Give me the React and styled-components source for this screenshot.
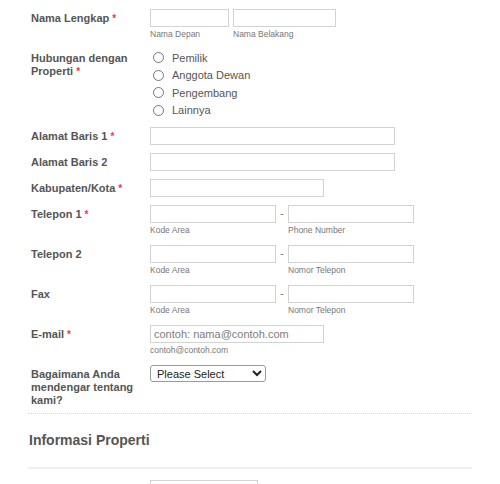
import React from 'react';
import styled, {createGlobalStyle} from "styled-components";

const GlobalStyle = createGlobalStyle`
    html, body {
        margin: 0;
        padding: 0;
        background: #fff;
    }
    body {
        font-family: "Liberation Sans", Arial, sans-serif;
        color: #555;
    }
`

const Form = styled.form`
    padding-top: 5px;
    width: 500px;
`

const Row = styled.div`
    display: flex;
    align-items: flex-start;
    padding: 4px 0 4px 31px;
    margin-top: ${props => props.$mt || 0}px;
`

const Label = styled.label`
    flex: none;
    width: 111px;
    padding: 3px 8px 0 0;
    font-size: 11px;
    font-weight: bold;
    line-height: 13px;
    color: #555;
`

const Req = styled.span`
    color: #f23a3c;
    font-size: 10px;
    line-height: 13px;
    margin-left: 3px;
`

const Field = styled.div`
    display: flex;
    align-items: flex-start;
`

const Group = styled.div`
    display: flex;
    flex-direction: column;
    margin-left: ${props => props.$ml || 0}px;
`

const Input = styled.input`
    box-sizing: border-box;
    width: ${props => props.$w}px;
    height: 18px;
    margin: 0;
    padding: 0 3px;
    border: 1px solid #d3d3d3;
    border-radius: 0;
    font-family: "Liberation Sans", Arial, sans-serif;
    font-size: 11px;
    color: #555;
    outline: none;
    &::placeholder {
        color: #7d7d7d;
    }
`

const Sub = styled.span`
    font-size: 8.5px;
    line-height: 14px;
    color: #777;
`

const Dash = styled.span`
    width: 12px;
    text-align: center;
    font-size: 10px;
    line-height: 18px;
    color: #777;
`

const RadioList = styled.div`
    display: flex;
    flex-direction: column;
`

const RadioItem = styled.label`
    display: flex;
    align-items: center;
    height: 17.5px;
    font-size: 11px;
    color: #555;
`

const Circle = styled.span`
    box-sizing: border-box;
    width: 11px;
    height: 11px;
    margin: 0 8px 0 3px;
    border: 1px solid #777;
    border-radius: 50%;
    background: #fff;
`

const Select = styled.select`
    box-sizing: border-box;
    width: 116px;
    height: 17px;
    margin: 0;
    padding: 0 2px;
    border: 1px solid #9a9a9a;
    border-radius: 3px;
    background: #fff;
    font-family: "Liberation Sans", Arial, sans-serif;
    font-size: 11px;
    color: #222;
`

const Divider = styled.hr`
    margin: ${props => props.$solid ? 0 : 2}px 28px 0;
    border: none;
    border-top: ${props => props.$solid ? '2px solid #efefef' : '1px dotted #d8d8d8'};
    height: 0;
`

const Heading = styled.h2`
    margin: 0;
    padding: 18px 0 19px 29px;
    font-size: 14px;
    line-height: 16px;
    font-weight: bold;
    color: #555;
`

const Phone = ({left, right}) => (
    <Field>
        <Group>
            <Input $w={126}/>
            <Sub>{left}</Sub>
        </Group>
        <Dash>-</Dash>
        <Group>
            <Input $w={126}/>
            <Sub>{right}</Sub>
        </Group>
    </Field>
)

const roles = ['Pemilik', 'Anggota Dewan', 'Pengembang', 'Lainnya']

export default function App() {
    return (
        <>
            <GlobalStyle/>
            <Form>
                <Row>
                    <Label>Nama Lengkap<Req>*</Req></Label>
                    <Field>
                        <Group>
                            <Input $w={79}/>
                            <Sub>Nama Depan</Sub>
                        </Group>
                        <Group $ml={4}>
                            <Input $w={103}/>
                            <Sub>Nama Belakang</Sub>
                        </Group>
                    </Field>
                </Row>
                <Row>
                    <Label>Hubungan dengan Properti<Req>*</Req></Label>
                    <RadioList>
                        {roles.map(r => (
                            <RadioItem key={r}><Circle/>{r}</RadioItem>
                        ))}
                    </RadioList>
                </Row>
                <Row>
                    <Label>Alamat Baris 1<Req>*</Req></Label>
                    <Input $w={245}/>
                </Row>
                <Row>
                    <Label>Alamat Baris 2</Label>
                    <Input $w={245}/>
                </Row>
                <Row>
                    <Label>Kabupaten/Kota<Req>*</Req></Label>
                    <Input $w={174}/>
                </Row>
                <Row>
                    <Label>Telepon 1<Req>*</Req></Label>
                    <Phone left="Kode Area" right="Phone Number"/>
                </Row>
                <Row>
                    <Label>Telepon 2</Label>
                    <Phone left="Kode Area" right="Nomor Telepon"/>
                </Row>
                <Row>
                    <Label>Fax</Label>
                    <Phone left="Kode Area" right="Nomor Telepon"/>
                </Row>
                <Row>
                    <Label>E-mail<Req>*</Req></Label>
                    <Group>
                        <Input $w={174} placeholder="contoh: nama@contoh.com"/>
                        <Sub>contoh@contoh.com</Sub>
                    </Group>
                </Row>
                <Row>
                    <Label>Bagaimana Anda mendengar tentang kami?</Label>
                    <Select defaultValue="">
                        <option value="">Please Select</option>
                        <option>Internet</option>
                        <option>Teman</option>
                        <option>Iklan</option>
                    </Select>
                </Row>
                <Divider/>
                <Heading>Informasi Properti</Heading>
                <Divider $solid/>
                <Row $mt={7}>
                    <Label>Jenis Properti<Req>*</Req></Label>
                    <Input $w={108}/>
                </Row>
            </Form>
        </>
    );
}
